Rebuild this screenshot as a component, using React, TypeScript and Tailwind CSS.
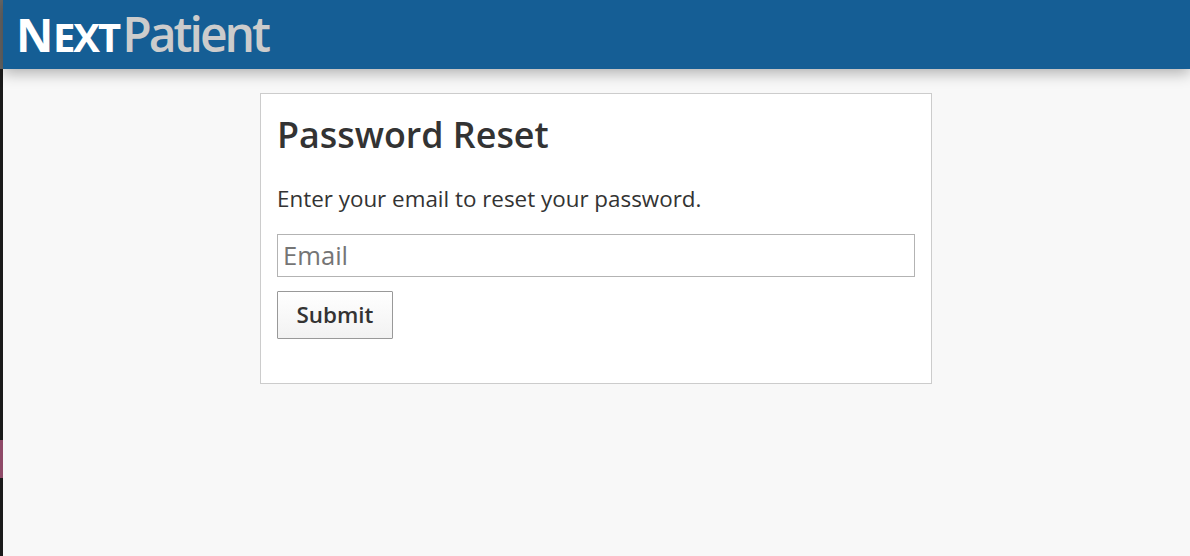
export default function App() {
  return (
    <div className="flex h-[556px] w-[1190px] overflow-hidden bg-[#f8f8f8] font-['Open_Sans',sans-serif] text-[#333]">
      {/* window edge at the far left */}
      <div className="flex w-[3px] shrink-0 flex-col">
        <div className="h-[69px] bg-[#666]" />
        <div className="h-[371px] bg-[#1a1a1a]" />
        <div className="h-[38px] bg-[#8f4a68]" />
        <div className="flex-1 bg-[#1a1a1a]" />
      </div>

      <div className="flex min-w-0 flex-1 flex-col">
        <header className="z-10 flex h-[69px] shrink-0 items-center bg-[#155e95] pb-[2px] pl-[13px] shadow-[0_4px_14px_rgba(0,0,0,0.3)]">
          <div className="flex items-baseline leading-none">
            <span className="text-[46px] font-bold tracking-[-1.5px] text-white">N</span>
            <span className="mr-[3px] ml-[1px] text-[40px] font-bold tracking-[-2px] text-white">EXT</span>
            <span className="text-[48px] font-semibold tracking-[-3px] text-[#ccc]">Patient</span>
          </div>
        </header>

        <main className="flex justify-center pr-[1px] pt-6">
          <section className="h-[291px] w-[672px] border border-[#ccc] bg-white px-4 pt-[17px]">
            <h1 className="text-[35.84px] leading-[48px] font-semibold text-[#333]">Password Reset</h1>
            <p className="mt-[25px] text-[22.4px] leading-[30px] text-[#333]">Enter your email to reset your password.</p>
            <input
              type="text"
              placeholder="Email"
              className="mt-[20px] block h-[43px] w-full border border-[#b3b3b3] bg-white px-[5px] text-[25.6px] text-[#333] outline-none placeholder:text-[#757575]"
            />
            <button className="mt-[14px] block h-[48px] w-[116px] rounded-[1px] border border-[#999] bg-gradient-to-b from-white to-[#f2f2f2] text-[22.4px] font-semibold text-[#333]">
              Submit
            </button>
          </section>
        </main>
      </div>
    </div>
  );
}
